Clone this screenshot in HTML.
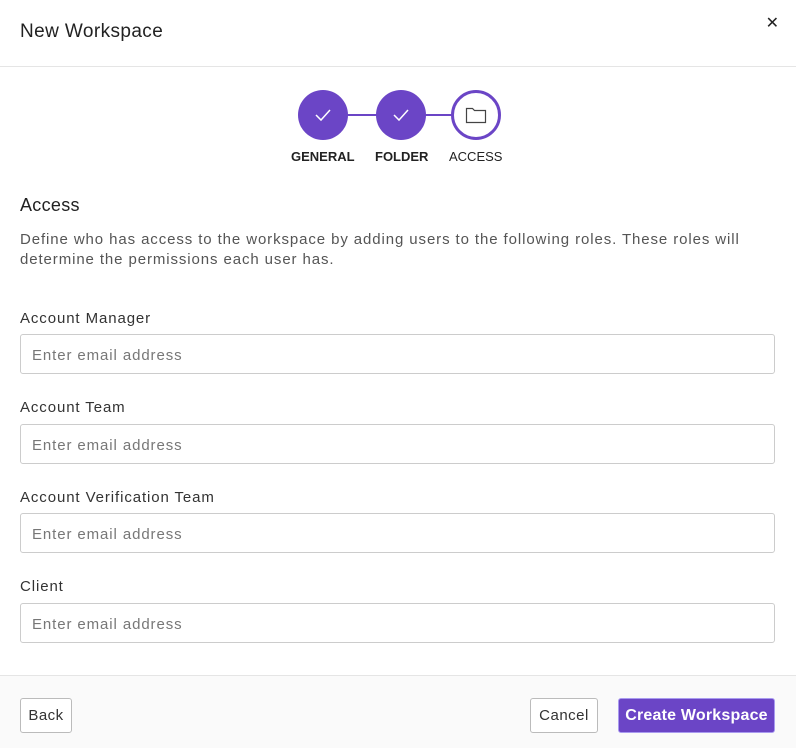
<!DOCTYPE html>
<html><head><style>
*{box-sizing:border-box;margin:0;padding:0}
body{width:796px;height:748px;background:#fff;font-family:"Liberation Sans",sans-serif;color:#333;position:relative;overflow:hidden;letter-spacing:0.9px}
.hdr{height:67px;border-bottom:1px solid #e5e5e5;position:relative}
.hdr h1{position:absolute;left:20px;top:21px;font-size:19px;font-weight:normal;color:#222;letter-spacing:0.4px}
.x{position:absolute;right:17px;top:13px;font-size:16px;color:#222;letter-spacing:0}
.c{position:absolute;width:50px;height:50px;border-radius:50%;top:90px;background:#6b45c6;display:flex;align-items:center;justify-content:center}
.line{position:absolute;top:114px;height:2px;background:#6b45c6}
.lbl{position:absolute;top:149px;font-size:13px;color:#222;font-weight:bold;letter-spacing:0}
h2{position:absolute;left:20px;top:195px;font-size:18px;font-weight:normal;color:#222;letter-spacing:0.3px}
.desc{position:absolute;left:20px;top:230px;width:760px;font-size:15px;line-height:20px;color:#555}
.f{position:absolute;left:20px;font-size:15px;color:#333}
.in{position:absolute;left:20px;width:755px;height:40px;border:1px solid #ccc;border-radius:3px;font-size:15px;color:#777;padding:12px 11px 0}
.ft{position:absolute;left:0;top:675px;width:796px;height:73px;background:#fafafa;border-top:1px solid #e5e5e5}
.b{position:absolute;top:698px;height:35px;border:1px solid #bbb;border-radius:3px;background:#fff;font-size:15px;padding:8px 0;color:#333;text-align:center;letter-spacing:0.5px}
</style></head><body>
<div class="hdr"><h1>New Workspace</h1><div class="x">✕</div></div>
<div class="line" style="left:347px;width:30px"></div>
<div class="line" style="left:425px;width:28px"></div>
<div class="c" style="left:298px"><svg width="18" height="14" viewBox="0 0 18 14"><path d="M2 7l5 5 9-10" stroke="#fff" stroke-width="1.5" fill="none"/></svg></div>
<div class="c" style="left:376px"><svg width="18" height="14" viewBox="0 0 18 14"><path d="M2 7l5 5 9-10" stroke="#fff" stroke-width="1.5" fill="none"/></svg></div>
<div class="c" style="left:451px;background:#fff;border:3px solid #6b45c6"><svg width="22" height="18" viewBox="0 0 22 18"><path d="M1.5 2.5h6l2 2h11v12h-19z" stroke="#444" stroke-width="1.2" fill="none"/></svg></div>
<div class="lbl" style="left:291px">GENERAL</div>
<div class="lbl" style="left:375px">FOLDER</div>
<div class="lbl" style="left:449px;font-weight:normal">ACCESS</div>
<h2>Access</h2>
<div class="desc">Define who has access to the workspace by adding users to the following roles. These roles will determine the permissions each user has.</div>
<div class="f" style="top:310px">Account Manager</div><div class="in" style="top:334px">Enter email address</div>
<div class="f" style="top:399px">Account Team</div><div class="in" style="top:424px">Enter email address</div>
<div class="f" style="top:489px">Account Verification Team</div><div class="in" style="top:513px">Enter email address</div>
<div class="f" style="top:578px">Client</div><div class="in" style="top:603px">Enter email address</div>
<div class="ft"></div>
<div class="b" style="left:20px;width:52px">Back</div>
<div class="b" style="left:530px;width:68px">Cancel</div>
<div class="b" style="left:618px;width:157px;background:#6b45c6;border-color:#a99af0;color:#fff;font-weight:bold;font-size:16px;letter-spacing:0.2px">Create Workspace</div>
</body></html>
